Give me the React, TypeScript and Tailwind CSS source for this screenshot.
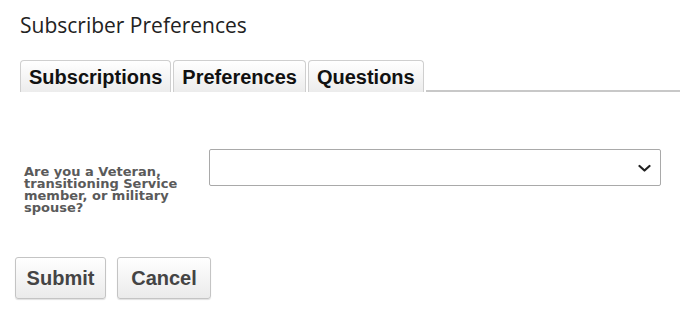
import React from 'react';

const tabs = ['Subscriptions', 'Preferences', 'Questions'];

export default function App() {
  return (
    <div className="w-[700px] h-[320px] bg-white overflow-hidden">
      <div className="pl-5 pr-5 pt-[12px]">
        <h1 className="text-[21px] leading-[26px] text-[#222] font-['Open_Sans',sans-serif] font-normal">
          Subscriber Preferences
        </h1>

        <div className="mt-[22px] flex items-end h-[32px]">
          {tabs.map((t) => (
            <div
              key={t}
              className="mr-[2px] h-[32px] px-[8px] flex items-center border border-b-0 border-[#cfcfcf] rounded-t-[4px] bg-gradient-to-b from-white to-[#ececec] text-[20px] font-bold text-[#111] font-['Liberation_Sans',Arial,sans-serif]"
            >
              {t}
            </div>
          ))}
          <div className="flex-1 border-b-2 border-[#c8c8c8]" />
        </div>
      </div>

      <div className="mt-[57px] flex items-start pl-6">
        <label className="w-[185px] mt-[17px] text-[13px] leading-[12px] font-bold text-[#5a5a5a] font-['DejaVu_Sans',Verdana,sans-serif]">
          Are you a Veteran, transitioning Service member, or military spouse?
        </label>
        <div className="relative w-[452px] h-[37px] border border-[#a9a9a9] rounded-[2px] bg-white">
          <svg
            className="absolute right-[9px] top-[14px]"
            width="13"
            height="9"
            viewBox="0 0 13 9"
            fill="none"
          >
            <path d="M1.5 2 L6.5 6.5 L11.5 2" stroke="#222" strokeWidth="2.2" strokeLinecap="round" strokeLinejoin="round" />
          </svg>
        </div>
      </div>

      <div className="mt-[43px] pl-[15px] flex gap-[11px]">
        <button className="w-[91px] h-[42px] border border-[#c4c4c4] rounded-[3px] bg-gradient-to-b from-white to-[#ebebeb] shadow-[0_1px_1px_rgba(0,0,0,0.12)] text-[20px] font-bold text-[#444] font-['Liberation_Sans',Arial,sans-serif]">
          Submit
        </button>
        <button className="w-[94px] h-[42px] border border-[#c4c4c4] rounded-[3px] bg-gradient-to-b from-white to-[#ebebeb] shadow-[0_1px_1px_rgba(0,0,0,0.12)] text-[20px] font-bold text-[#444] font-['Liberation_Sans',Arial,sans-serif]">
          Cancel
        </button>
      </div>
    </div>
  );
}
